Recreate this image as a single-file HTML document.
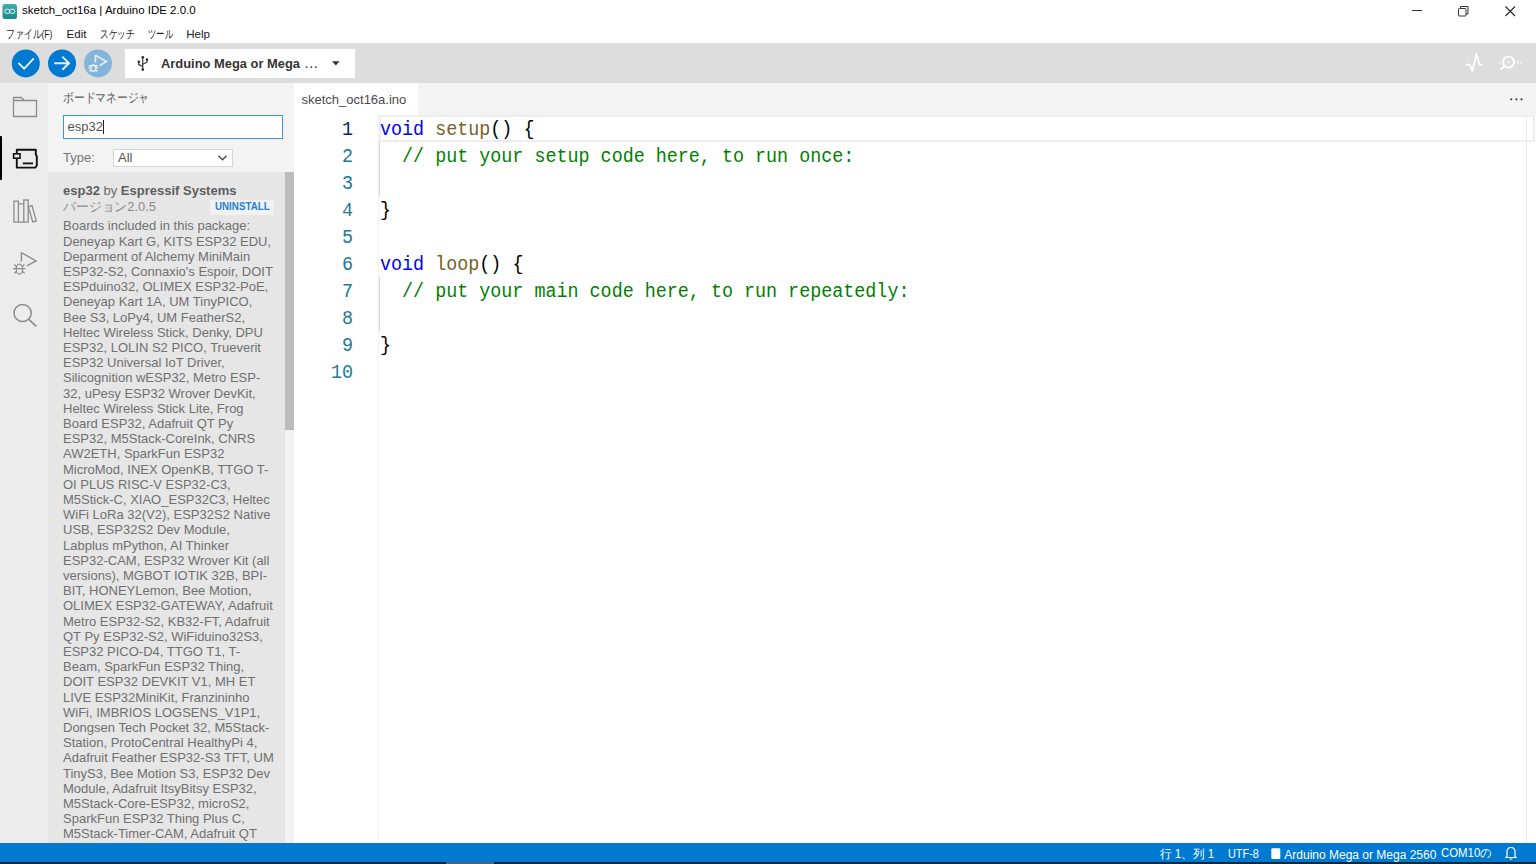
<!DOCTYPE html>
<html><head><meta charset="utf-8">
<style>
*{margin:0;padding:0;box-sizing:border-box}
html,body{width:1536px;height:864px;overflow:hidden;background:#fff;font-family:"Liberation Sans",sans-serif;position:relative}
.a{position:absolute}
.t{position:absolute;white-space:pre;line-height:1}
.sx{display:inline-block;transform-origin:0 50%}
svg{position:absolute;overflow:visible}
#toolbar{left:0;top:43px;width:1536px;height:40px;background:#dddddd}
#act{left:0;top:83px;width:48px;height:760px;background:#ececec}
#panel{left:48px;top:83px;width:246px;height:760px;background:#f3f3f3}
#tabs{left:294px;top:83px;width:1242px;height:32px;background:#f3f3f3}
#editor{left:294px;top:115px;width:1242px;height:728px;background:#fff}
#status{left:0;top:843px;width:1536px;height:19px;background:#0079d1}
#taskbar{left:0;top:862px;width:1536px;height:2px;background:#1b2630}
.code{font-family:"Liberation Mono",monospace;font-size:20.5px;line-height:27px;white-space:pre}
.ln{position:absolute;left:0;width:353px;text-align:right;color:#237893;transform:scaleX(0.8966);transform-origin:353px 0}
.cl{position:absolute;left:380px;color:#000;transform:scaleX(0.8966);transform-origin:0 0}
.kw{color:#0000ff}.fn{color:#795e26}.cm{color:#008000}
#desc{left:63px;top:218.3px;font-size:13px;line-height:15.2px;color:#707070;white-space:pre}
</style></head><body>
<!-- title bar -->
<svg style="left:0;top:0" width="22" height="22" viewBox="0 0 22 22">
 <defs><linearGradient id="lg" x1="0" y1="0" x2="0" y2="1"><stop offset="0" stop-color="#3fb0b0"/><stop offset="1" stop-color="#14898b"/></linearGradient></defs>
 <rect x="2.5" y="4" width="14.5" height="15" rx="2.5" fill="url(#lg)"/>
 <ellipse cx="7.3" cy="11.3" rx="2.6" ry="2.2" fill="none" stroke="#e6f4f4" stroke-width="1"/>
 <ellipse cx="12.3" cy="11.3" rx="2.6" ry="2.2" fill="none" stroke="#e6f4f4" stroke-width="1"/>
</svg>
<div class="t" style="left:22px;top:5px;font-size:11.5px;color:#000">sketch_oct16a | Arduino IDE 2.0.0</div>
<!-- window controls -->
<svg style="left:1400px;top:0" width="136" height="22" viewBox="0 0 136 22">
 <line x1="12" y1="10.5" x2="22" y2="10.5" stroke="#333" stroke-width="1"/>
 <rect x="58.5" y="8.5" width="7.5" height="7.5" rx="0.8" fill="none" stroke="#333" stroke-width="1"/>
 <path d="M60.5 8.5 V6.5 H68 V14 H66" fill="none" stroke="#333" stroke-width="1"/>
 <path d="M105.5 6.5 L115 16 M115 6.5 L105.5 16" stroke="#2a2a2a" stroke-width="1.15"/>
</svg>
<!-- menu -->
<div class="t" style="left:6.4px;top:28.1px;font-size:11.6px;color:#1a1a1a"><span class="sx" style="transform:scaleX(0.737)">ファイル(F)</span></div>
<div class="t" style="left:66.6px;top:28.1px;font-size:11.6px;color:#1a1a1a">Edit</div>
<div class="t" style="left:99.6px;top:28.1px;font-size:11.6px;color:#1a1a1a"><span class="sx" style="transform:scaleX(0.717)">スケッチ</span></div>
<div class="t" style="left:147.6px;top:28.1px;font-size:11.6px;color:#1a1a1a"><span class="sx" style="transform:scaleX(0.694)">ツール</span></div>
<div class="t" style="left:186.2px;top:28.1px;font-size:11.6px;color:#1a1a1a">Help</div>

<!-- toolbar -->
<div id="toolbar" class="a"></div>
<svg style="left:0;top:43px" width="120" height="40" viewBox="0 0 120 40">
 <circle cx="25.8" cy="20.4" r="14" fill="#0079d1"/>
 <path d="M18.3 19.9 L24.2 25.6 L33.8 15.3" fill="none" stroke="#e8eef4" stroke-width="1.9"/>
 <circle cx="62" cy="20.4" r="14" fill="#0079d1"/>
 <path d="M54.2 20.2 H69 M62.3 13.6 L69 20.2 L62.3 26.8" fill="none" stroke="#e8eef4" stroke-width="1.9"/>
 <circle cx="98" cy="20.4" r="14" fill="#84b5d9"/>
 <path d="M95.45 12.1 V19.4 M95.45 12.3 L106.4 18.6 L99.8 22.5" fill="none" stroke="#e3edf4" stroke-width="1.7" stroke-linejoin="miter"/>
 <g fill="none" stroke="#e3edf4" stroke-width="1.4">
  <ellipse cx="93.3" cy="25.1" rx="2.5" ry="3.2"/>
  <path d="M90.8 22.8 H95.8 M88.7 22.7 H91 M95.6 22.7 H97.9 M88.4 24.9 H91 M95.6 24.9 H98.2 M89 27.8 H91 M95.6 27.8 H97.6"/>
 </g>
</svg>
<div class="a" style="left:125px;top:49px;width:230px;height:28.5px;background:#fff"></div>
<svg style="left:125px;top:49px" width="230" height="29" viewBox="0 0 230 29">
 <g fill="none" stroke="#2a2a2a" stroke-width="1.1">
  <path d="M17.75 8.1 V20.7"/>
  <path d="M13.8 13 V15.6 L17.75 17.6"/>
  <path d="M22 10.6 V13.2 L17.75 15.3"/>
 </g>
 <circle cx="17.75" cy="8.2" r="1.3" fill="#2a2a2a"/>
 <circle cx="17.75" cy="20.6" r="1.3" fill="#2a2a2a"/>
 <circle cx="13.8" cy="12.8" r="1.3" fill="#2a2a2a"/>
 <circle cx="22" cy="10.5" r="1.3" fill="#2a2a2a"/>
 <path d="M207 12.3 H214.6 L210.8 16.4 Z" fill="#333"/>
</svg>
<div class="t" style="left:161.4px;top:57.2px;font-size:13px;font-weight:bold;color:#333"><span class="sx" style="transform:scaleX(0.992)">Arduino Mega or Mega</span></div>
<svg style="left:300px;top:60px" width="20" height="10" viewBox="0 0 20 10"><circle cx="6.5" cy="7.1" r="0.95" fill="#333"/><circle cx="11.3" cy="7.1" r="0.95" fill="#333"/><circle cx="15.8" cy="7.1" r="0.95" fill="#333"/></svg>
<!-- right toolbar icons -->
<svg style="left:1456px;top:48px" width="80" height="32" viewBox="0 0 80 32">
 <path d="M10.9 16.7 Q13.6 15.8 14.6 18.5 L16.4 22.8 L20.3 6.2 L23.4 16.1 Q24 17 25.5 16.9" fill="none" stroke="#fff" stroke-width="1.9" stroke-linejoin="round" stroke-linecap="round"/>
 <circle cx="52.5" cy="14.1" r="5.5" fill="none" stroke="#fff" stroke-width="1.9"/>
 <circle cx="52.5" cy="14.1" r="1" fill="#fff"/>
 <path d="M47.8 18.6 L45.5 21" stroke="#fff" stroke-width="1.9" stroke-linecap="round"/>
 <circle cx="43.2" cy="14.5" r="0.9" fill="#fff"/>
 <circle cx="61.5" cy="14.5" r="0.9" fill="#fff"/>
 <circle cx="65.4" cy="14.5" r="0.9" fill="#fff"/>
</svg>

<!-- activity bar -->
<div id="act" class="a"></div>
<div class="a" style="left:0;top:136px;width:2px;height:44px;background:#000;border-radius:0 1px 1px 0"></div>
<svg style="left:0;top:83px" width="48" height="260" viewBox="0 0 48 260">
 <!-- folder -->
 <path d="M13.5 33.5 V14.5 H21.5 L24.5 17.5 H36.5 V33.5 Z M13.5 17.5 H24.5" fill="none" stroke="#8c8c8c" stroke-width="1.3"/>
 <!-- board -->
 <path d="M16.8 70.5 V66.8 H35.8 V71.5 L36.8 73.5 V82.5 L35.5 84.6 H16.8 V75.3" fill="none" stroke="#111" stroke-width="1.9" stroke-linejoin="round"/>
 <rect x="13.6" y="70.8" width="6.4" height="4.4" fill="none" stroke="#111" stroke-width="1.6"/>
 <path d="M22.8 80.4 H33" stroke="#111" stroke-width="1.8"/>
 <!-- library -->
 <g fill="none" stroke="#8c8c8c" stroke-width="1.3">
  <path d="M13.9 139.2 V118.2 H18.4 V139.2 Z M18.4 139.2 V120.8 H23.8 V139.2 H18.4 M23.8 139.2 V117 H28.2 V139.2 Z"/>
  <path d="M28.4 123.6 L32 122.6 L36.3 138 L32.7 139 Z"/>
 </g>
 <!-- debug -->
 <path d="M21.4 169.2 V178.5 M21.4 169.6 L36 177.9 L26.9 182.9" fill="none" stroke="#8c8c8c" stroke-width="1.4"/>
 <g fill="none" stroke="#8c8c8c" stroke-width="1.3">
  <ellipse cx="19.4" cy="186.2" rx="3.2" ry="5"/>
  <path d="M13.1 185.6 H25.5 M14.3 181.5 L16.6 183.5 M24.5 181.5 L22.2 183.5 M14.3 190.2 L16.6 188.2 M24.5 190.2 L22.2 188.2"/>
 </g>
 <!-- search -->
 <circle cx="22.6" cy="230" r="8.6" fill="none" stroke="#8c8c8c" stroke-width="1.5"/>
 <path d="M28.6 236.2 L36.3 243.4" stroke="#8c8c8c" stroke-width="1.6"/>
</svg>

<!-- board manager panel -->
<div id="panel" class="a"></div>
<div class="t" style="left:63px;top:91px;font-size:13px;color:#5c5c5c"><span class="sx" style="transform:scaleX(0.827)">ボードマネージャ</span></div>
<div class="a" style="left:63px;top:115px;width:220px;height:24px;background:#fff;border:1px solid #3794e9"></div>
<div class="t" style="left:67.5px;top:119.8px;font-size:13px;color:#555">esp32</div>
<div class="a" style="left:103px;top:119.5px;width:1px;height:14px;background:#222"></div>
<div class="t" style="left:63px;top:151.2px;font-size:13px;color:#777">Type:</div>
<div class="a" style="left:113px;top:149px;width:120px;height:18px;background:#fff;border:1px solid #d6d6d6"></div>
<div class="t" style="left:118px;top:151.2px;font-size:13px;color:#555">All</div>
<svg style="left:215px;top:153px" width="14" height="10" viewBox="0 0 14 10">
 <path d="M3.5 2.8 L7.5 6.8 L11.5 2.8" fill="none" stroke="#444" stroke-width="1.3"/>
</svg>
<div class="a" style="left:48px;top:172px;width:237px;height:671px;background:#e6e6e6"></div>
<div class="a" style="left:285px;top:172px;width:9px;height:671px;background:#f2f2f2"></div>
<div class="a" style="left:285px;top:172px;width:8.6px;height:257.5px;background:#bcbcbc"></div>
<div class="t" style="left:63px;top:184px;font-size:13px;color:#6e6e6e"><b style="color:#5e5e5e">esp32</b> by <b style="color:#5e5e5e">Espressif Systems</b></div>
<div class="t" style="left:63px;top:200px;font-size:13px;color:#8a8a8a"><span class="sx" style="transform:scaleX(0.99)">バージョン2.0.5</span></div>
<div class="a" style="left:210.4px;top:199.8px;width:64px;height:15px;background:#f1f1f1"></div>
<div class="t" style="left:214.6px;top:201px;font-size:11px;font-weight:bold;color:#1f82d0"><span class="sx" style="transform:scaleX(0.889)">UNINSTALL</span></div>
<div id="desc" class="a">Boards included in this package:
Deneyap Kart G, KITS ESP32 EDU,
Deparment of Alchemy MiniMain
ESP32-S2, Connaxio's Espoir, DOIT
ESPduino32, OLIMEX ESP32-PoE,
Deneyap Kart 1A, UM TinyPICO,
Bee S3, LoPy4, UM FeatherS2,
Heltec Wireless Stick, Denky, DPU
ESP32, LOLIN S2 PICO, Trueverit
ESP32 Universal IoT Driver,
Silicognition wESP32, Metro ESP-
32, uPesy ESP32 Wrover DevKit,
Heltec Wireless Stick Lite, Frog
Board ESP32, Adafruit QT Py
ESP32, M5Stack-CoreInk, CNRS
AW2ETH, SparkFun ESP32
MicroMod, INEX OpenKB, TTGO T-
OI PLUS RISC-V ESP32-C3,
M5Stick-C, XIAO_ESP32C3, Heltec
WiFi LoRa 32(V2), ESP32S2 Native
USB, ESP32S2 Dev Module,
Labplus mPython, AI Thinker
ESP32-CAM, ESP32 Wrover Kit (all
versions), MGBOT IOTIK 32B, BPI-
BIT, HONEYLemon, Bee Motion,
OLIMEX ESP32-GATEWAY, Adafruit
Metro ESP32-S2, KB32-FT, Adafruit
QT Py ESP32-S2, WiFiduino32S3,
ESP32 PICO-D4, TTGO T1, T-
Beam, SparkFun ESP32 Thing,
DOIT ESP32 DEVKIT V1, MH ET
LIVE ESP32MiniKit, Franzininho
WiFi, IMBRIOS LOGSENS_V1P1,
Dongsen Tech Pocket 32, M5Stack-
Station, ProtoCentral HealthyPi 4,
Adafruit Feather ESP32-S3 TFT, UM
TinyS3, Bee Motion S3, ESP32 Dev
Module, Adafruit ItsyBitsy ESP32,
M5Stack-Core-ESP32, microS2,
SparkFun ESP32 Thing Plus C,
M5Stack-Timer-CAM, Adafruit QT
Py ESP32, Adafruit Feather</div>

<!-- tabs -->
<div id="tabs" class="a"></div>
<div class="a" style="left:294px;top:83px;width:124px;height:32px;background:#fff"></div>
<div class="t" style="left:301.5px;top:92.8px;font-size:13px;color:#4a4a4a">sketch_oct16a.ino</div>
<svg style="left:1500px;top:90px" width="30" height="20" viewBox="0 0 30 20">
 <circle cx="11.2" cy="9.3" r="1.1" fill="#424242"/>
 <circle cx="16.4" cy="9.3" r="1.1" fill="#424242"/>
 <circle cx="21.5" cy="9.3" r="1.1" fill="#424242"/>
</svg>

<!-- editor -->
<div id="editor" class="a"></div>
<div class="a" style="left:379px;top:115px;width:1156px;height:27px;border:2px solid #eeeeee"></div>
<div class="a" style="left:378px;top:115px;width:1px;height:728px;background:#f3f3f3"></div>
<div class="a" style="left:379px;top:142px;width:1px;height:54px;background:#d3d3d3"></div>
<div class="a" style="left:379px;top:277px;width:1px;height:54px;background:#d3d3d3"></div>
<div class="a" style="left:1526px;top:115px;width:1px;height:728px;background:#e8e8e8"></div>
<div class="a code" style="left:0;top:116px;width:1536px;height:300px">
<div class="ln" style="top:0;color:#0b216f">1</div>
<div class="ln" style="top:27px">2</div>
<div class="ln" style="top:54px">3</div>
<div class="ln" style="top:81px">4</div>
<div class="ln" style="top:108px">5</div>
<div class="ln" style="top:135px">6</div>
<div class="ln" style="top:162px">7</div>
<div class="ln" style="top:189px">8</div>
<div class="ln" style="top:216px">9</div>
<div class="ln" style="top:243px">10</div>
<div class="cl" style="top:0"><span class="kw">void</span> <span class="fn">setup</span>() {</div>
<div class="cl" style="top:27px">  <span class="cm">// put your setup code here, to run once:</span></div>
<div class="cl" style="top:81px">}</div>
<div class="cl" style="top:135px"><span class="kw">void</span> <span class="fn">loop</span>() {</div>
<div class="cl" style="top:162px">  <span class="cm">// put your main code here, to run repeatedly:</span></div>
<div class="cl" style="top:216px">}</div>
</div>

<!-- status bar -->
<div id="status" class="a"></div>
<div class="t" style="left:1159.8px;top:847.8px;font-size:12px;color:#fff"><span class="sx" style="transform:scaleX(0.968)">行 1、列 1</span></div>
<div class="t" style="left:1227.6px;top:848.1px;font-size:12px;color:#fff"><span class="sx" style="transform:scaleX(0.906)">UTF-8</span></div>
<svg style="left:1270px;top:846px" width="14" height="16" viewBox="0 0 14 16">
 <rect x="1.3" y="2.2" width="9" height="10.8" rx="1.2" fill="#fff"/>
</svg>
<div class="t" style="left:1284.3px;top:848.5px;font-size:12px;color:#fff">Arduino Mega or Mega 2560</div>
<div class="t" style="left:1441px;top:847.3px;font-size:12px;color:#fff"><span class="sx" style="transform:scaleX(0.95)">COM10の</span></div>
<svg style="left:1500px;top:843px" width="24" height="19" viewBox="0 0 24 19">
 <path d="M7 13.5 V9 Q7 4.5 11 4.5 Q15 4.5 15 9 V13.5 L16.3 14.5 H5.7 Z" fill="none" stroke="#fff" stroke-width="1.2" stroke-linejoin="round"/>
 <path d="M9.8 15.5 Q11 17 12.2 15.5" fill="none" stroke="#fff" stroke-width="1.1"/>
</svg>
<div id="taskbar" class="a"></div>
<div class="a" style="left:446px;top:862px;width:48px;height:2px;background:#56616b"></div>
</body></html>
